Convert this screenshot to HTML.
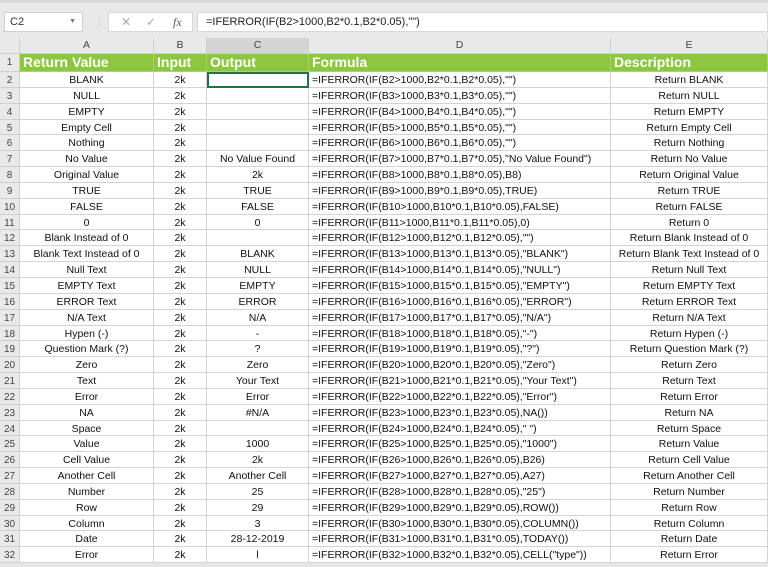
<!DOCTYPE html>
<html><head><meta charset="utf-8"><style>
*{margin:0;padding:0;box-sizing:border-box}
body{width:768px;height:567px;overflow:hidden;background:#e6e6e6;font-family:"Liberation Sans",Arial,sans-serif;position:relative}
.top{position:absolute;left:0;top:0;width:768px;height:38px;background:#e9e9e9;border-top:3px solid #d8d8d8}
.nb{position:absolute;left:4px;top:9px;width:79px;height:20px;background:#fff;border:1px solid #d0d0d0;font-size:11px;line-height:18px;padding-left:5px;color:#333}
.nb span{position:absolute;right:6px;top:0;font-size:7px;color:#777}
.dots{position:absolute;left:94px;top:13px;color:#aaa;font-size:10px}
.ib{position:absolute;left:108px;top:9px;width:85px;height:20px;background:#fff;border:1px solid #d8d8d8;color:#aaa;font-size:12px;line-height:18px}
.fb{position:absolute;left:197px;top:9px;width:571px;height:20px;background:#fff;border:1px solid #d8d8d8;font-size:11px;line-height:18px;padding-left:8px;color:#222}
.g{position:absolute;left:0;top:38px;display:grid;grid-template-columns:20px 134px 53px 102px 302px 157px;grid-template-rows:16px 18px repeat(31,15.85px);background:#fff}
.g div{border-right:1px solid #d4d4d4;border-bottom:1px solid #d4d4d4;font-size:10.5px;line-height:15px;padding-top:1px;white-space:nowrap;overflow:hidden;text-align:center;color:#111}
.g .h{background:#e9e9e9;color:#444;border-color:#cfcfcf;padding-top:0}
.g .hc{background:#d4d4d4}
.g .r{background:#e9e9e9;color:#444;font-size:10px;text-align:center;border-color:#cfcfcf}
.g .gr{background:#8dc640;color:#fff;font-weight:bold;font-size:14px;text-align:left;padding-left:3px;padding-top:0;line-height:17px;border-color:#a8d66a}
.g .f{text-align:left;padding-left:3px}
.g .sel{outline:2px solid #217346;outline-offset:-2px}
</style></head><body>
<div class="top">
<div class="nb">C2<span>▼</span></div>
<div class="dots">⋮</div>
<div class="ib"><span style="position:absolute;left:12px">✕</span><span style="position:absolute;left:37px">✓</span><span style="position:absolute;left:64px;font-style:italic;font-family:'Liberation Serif',serif;color:#555">fx</span></div>
<div class="fb">=IFERROR(IF(B2&gt;1000,B2*0.1,B2*0.05),"")</div>
</div>
<div class="g">
<div class="h"></div><div class="h">A</div><div class="h">B</div><div class="h hc">C</div><div class="h">D</div><div class="h">E</div>
<div class="r" style="line-height:17px;padding-top:0">1</div><div class="gr">Return Value</div><div class="gr">Input</div><div class="gr">Output</div><div class="gr">Formula</div><div class="gr">Description</div>
<div class="r">2</div><div>BLANK</div><div>2k</div><div class="sel"></div><div class="f">=IFERROR(IF(B2&gt;1000,B2*0.1,B2*0.05),"")</div><div>Return BLANK</div>
<div class="r">3</div><div>NULL</div><div>2k</div><div></div><div class="f">=IFERROR(IF(B3&gt;1000,B3*0.1,B3*0.05),"")</div><div>Return NULL</div>
<div class="r">4</div><div>EMPTY</div><div>2k</div><div></div><div class="f">=IFERROR(IF(B4&gt;1000,B4*0.1,B4*0.05),"")</div><div>Return EMPTY</div>
<div class="r">5</div><div>Empty Cell</div><div>2k</div><div></div><div class="f">=IFERROR(IF(B5&gt;1000,B5*0.1,B5*0.05),"")</div><div>Return Empty Cell</div>
<div class="r">6</div><div>Nothing</div><div>2k</div><div></div><div class="f">=IFERROR(IF(B6&gt;1000,B6*0.1,B6*0.05),"")</div><div>Return Nothing</div>
<div class="r">7</div><div>No Value</div><div>2k</div><div>No Value Found</div><div class="f">=IFERROR(IF(B7&gt;1000,B7*0.1,B7*0.05),"No Value Found")</div><div>Return No Value</div>
<div class="r">8</div><div>Original Value</div><div>2k</div><div>2k</div><div class="f">=IFERROR(IF(B8&gt;1000,B8*0.1,B8*0.05),B8)</div><div>Return Original Value</div>
<div class="r">9</div><div>TRUE</div><div>2k</div><div>TRUE</div><div class="f">=IFERROR(IF(B9&gt;1000,B9*0.1,B9*0.05),TRUE)</div><div>Return TRUE</div>
<div class="r">10</div><div>FALSE</div><div>2k</div><div>FALSE</div><div class="f">=IFERROR(IF(B10&gt;1000,B10*0.1,B10*0.05),FALSE)</div><div>Return FALSE</div>
<div class="r">11</div><div>0</div><div>2k</div><div>0</div><div class="f">=IFERROR(IF(B11&gt;1000,B11*0.1,B11*0.05),0)</div><div>Return 0</div>
<div class="r">12</div><div>Blank Instead of 0</div><div>2k</div><div></div><div class="f">=IFERROR(IF(B12&gt;1000,B12*0.1,B12*0.05),"")</div><div>Return Blank Instead of 0</div>
<div class="r">13</div><div>Blank Text Instead of 0</div><div>2k</div><div>BLANK</div><div class="f">=IFERROR(IF(B13&gt;1000,B13*0.1,B13*0.05),"BLANK")</div><div>Return Blank Text Instead of 0</div>
<div class="r">14</div><div>Null Text</div><div>2k</div><div>NULL</div><div class="f">=IFERROR(IF(B14&gt;1000,B14*0.1,B14*0.05),"NULL")</div><div>Return Null Text</div>
<div class="r">15</div><div>EMPTY Text</div><div>2k</div><div>EMPTY</div><div class="f">=IFERROR(IF(B15&gt;1000,B15*0.1,B15*0.05),"EMPTY")</div><div>Return EMPTY Text</div>
<div class="r">16</div><div>ERROR Text</div><div>2k</div><div>ERROR</div><div class="f">=IFERROR(IF(B16&gt;1000,B16*0.1,B16*0.05),"ERROR")</div><div>Return ERROR Text</div>
<div class="r">17</div><div>N/A Text</div><div>2k</div><div>N/A</div><div class="f">=IFERROR(IF(B17&gt;1000,B17*0.1,B17*0.05),"N/A")</div><div>Return N/A Text</div>
<div class="r">18</div><div>Hypen (-)</div><div>2k</div><div>-</div><div class="f">=IFERROR(IF(B18&gt;1000,B18*0.1,B18*0.05),"-")</div><div>Return Hypen (-)</div>
<div class="r">19</div><div>Question Mark (?)</div><div>2k</div><div>?</div><div class="f">=IFERROR(IF(B19&gt;1000,B19*0.1,B19*0.05),"?")</div><div>Return Question Mark (?)</div>
<div class="r">20</div><div>Zero</div><div>2k</div><div>Zero</div><div class="f">=IFERROR(IF(B20&gt;1000,B20*0.1,B20*0.05),"Zero")</div><div>Return Zero</div>
<div class="r">21</div><div>Text</div><div>2k</div><div>Your Text</div><div class="f">=IFERROR(IF(B21&gt;1000,B21*0.1,B21*0.05),"Your Text")</div><div>Return Text</div>
<div class="r">22</div><div>Error</div><div>2k</div><div>Error</div><div class="f">=IFERROR(IF(B22&gt;1000,B22*0.1,B22*0.05),"Error")</div><div>Return Error</div>
<div class="r">23</div><div>NA</div><div>2k</div><div>#N/A</div><div class="f">=IFERROR(IF(B23&gt;1000,B23*0.1,B23*0.05),NA())</div><div>Return NA</div>
<div class="r">24</div><div>Space</div><div>2k</div><div></div><div class="f">=IFERROR(IF(B24&gt;1000,B24*0.1,B24*0.05)," ")</div><div>Return Space</div>
<div class="r">25</div><div>Value</div><div>2k</div><div>1000</div><div class="f">=IFERROR(IF(B25&gt;1000,B25*0.1,B25*0.05),"1000")</div><div>Return Value</div>
<div class="r">26</div><div>Cell Value</div><div>2k</div><div>2k</div><div class="f">=IFERROR(IF(B26&gt;1000,B26*0.1,B26*0.05),B26)</div><div>Return Cell Value</div>
<div class="r">27</div><div>Another Cell</div><div>2k</div><div>Another Cell</div><div class="f">=IFERROR(IF(B27&gt;1000,B27*0.1,B27*0.05),A27)</div><div>Return Another Cell</div>
<div class="r">28</div><div>Number</div><div>2k</div><div>25</div><div class="f">=IFERROR(IF(B28&gt;1000,B28*0.1,B28*0.05),"25")</div><div>Return Number</div>
<div class="r">29</div><div>Row</div><div>2k</div><div>29</div><div class="f">=IFERROR(IF(B29&gt;1000,B29*0.1,B29*0.05),ROW())</div><div>Return Row</div>
<div class="r">30</div><div>Column</div><div>2k</div><div>3</div><div class="f">=IFERROR(IF(B30&gt;1000,B30*0.1,B30*0.05),COLUMN())</div><div>Return Column</div>
<div class="r">31</div><div>Date</div><div>2k</div><div>28-12-2019</div><div class="f">=IFERROR(IF(B31&gt;1000,B31*0.1,B31*0.05),TODAY())</div><div>Return Date</div>
<div class="r">32</div><div>Error</div><div>2k</div><div>l</div><div class="f">=IFERROR(IF(B32&gt;1000,B32*0.1,B32*0.05),CELL("type"))</div><div>Return Error</div>
</div>
</body></html>
